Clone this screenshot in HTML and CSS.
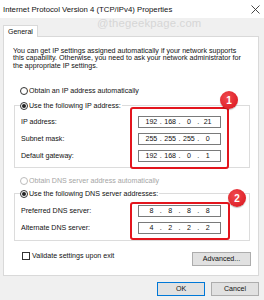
FILE: index.html
```html
<!DOCTYPE html>
<html>
<head>
<meta charset="utf-8">
<link rel="stylesheet" href="styles.css">
</head>
<body>
<div class="dialog">
  <div class="titlebar">
    <span class="title">Internet Protocol Version 4 (TCP/IPv4) Properties</span>
    <svg class="close" width="9" height="9" viewBox="0 0 9 9"><path d="M0.5 0.5 L8.5 8.5 M8.5 0.5 L0.5 8.5" stroke="#333" stroke-width="0.9" fill="none"/></svg>
  </div>
  <div class="tabs"><div class="tab">General</div></div>
  <div class="panel">
    <p class="intro">You can get IP settings assigned automatically if your network supports this capability. Otherwise, you need to ask your network administrator for the appropriate IP settings.</p>

    <div class="radio-row"><span class="radio"></span><span>Obtain an IP address automatically</span></div>
    <fieldset class="group group-ip">
      <legend class="radio-row"><span class="radio checked"></span><span>Use the following IP address:</span></legend>
      <div class="field"><span class="label">IP address:</span><span class="ip"><span>192</span><i>.</i><span>168</span><i>.</i><span>0</span><i>.</i><span>21</span></span></div>
      <div class="field"><span class="label">Subnet mask:</span><span class="ip"><span>255</span><i>.</i><span>255</span><i>.</i><span>255</span><i>.</i><span>0</span></span></div>
      <div class="field"><span class="label">Default gateway:</span><span class="ip"><span>192</span><i>.</i><span>168</span><i>.</i><span>0</span><i>.</i><span>1</span></span></div>
    </fieldset>

    <div class="radio-row disabled"><span class="radio"></span><span>Obtain DNS server address automatically</span></div>
    <fieldset class="group group-dns">
      <legend class="radio-row"><span class="radio checked"></span><span>Use the following DNS server addresses:</span></legend>
      <div class="field"><span class="label">Preferred DNS server:</span><span class="ip"><span>8</span><i>.</i><span>8</span><i>.</i><span>8</span><i>.</i><span>8</span></span></div>
      <div class="field"><span class="label">Alternate DNS server:</span><span class="ip"><span>4</span><i>.</i><span>2</span><i>.</i><span>2</span><i>.</i><span>2</span></span></div>
    </fieldset>

    <div class="bottom-row">
      <div class="check-row"><span class="checkbox"></span><span>Validate settings upon exit</span></div>
      <button class="btn advanced">Advanced...</button>
    </div>
  </div>
  <div class="footer">
    <button class="btn primary">OK</button>
    <button class="btn">Cancel</button>
  </div>

  <div class="watermark">@thegeekpage.com</div>
  <div class="mark mark-1"></div>
  <div class="badge badge-1">1</div>
  <div class="mark mark-2"></div>
  <div class="badge badge-2">2</div>
</div>
</body>
</html>
```

FILE: styles.css
```css
* { box-sizing: border-box; }
html, body { margin: 0; padding: 0; }
body {
  width: 264px;
  height: 300px;
  overflow: hidden;
  background: #f0f0f0;
  font-family: "Liberation Sans", Arial, sans-serif;
  font-size: 7.1px;
  color: #111;
}
.dialog {
  position: relative;
  width: 264px;
  height: 300px;
  background: #f0f0f0;
}
.titlebar {
  height: 18px;
  background: #fff;
  display: flex;
  align-items: center;
  justify-content: space-between;
  padding: 0 4px 0 3px;
}
.title { font-size: 7.75px; color: #111; }
.close { display: block; }

.tabs {
  height: 18px;
  display: flex;
  align-items: flex-end;
  padding-left: 3px;
}
.tab {
  width: 35px;
  height: 12px;
  margin-bottom: -1px;
  background: #fff;
  border: 1px solid #d9d9d9;
  border-bottom: none;
  position: relative;
  z-index: 1;
  padding: 2px 0 0 4px;
  font-size: 7px;
}

.panel {
  margin: 0 5px 0 3px;
  height: 240px;
  background: #fff;
  border: 1px solid #d9d9d9;
  padding: 0 0 0 9px;
  display: flex;
  flex-direction: column;
}
.intro {
  margin: 10.5px 0 0 0;
  line-height: 7.5px;
  width: 230px;
}

.radio-row {
  display: flex;
  align-items: center;
  gap: 1px;
  height: 9px;
}
.panel > .radio-row { margin: 16px 0 0 7px; }
.panel > .radio-row.disabled { margin-top: 8.5px; color: #a5a5a5; }
.radio {
  width: 8px;
  height: 8px;
  border: 1px solid #333;
  border-radius: 50%;
  background: #fff;
  display: flex;
  align-items: center;
  justify-content: center;
  flex: none;
}
.radio.checked::after {
  content: "";
  width: 4px;
  height: 4px;
  border-radius: 50%;
  background: #222;
}
.disabled .radio { border-color: #bcbcbc; }

.group {
  margin: 0 8px 0 1px;
  border: 1px solid #dcdcdc;
  padding: 0 0 0 6px;
  display: flex;
  flex-direction: column;
  gap: 5px;
}
.group legend {
  padding: 0 1px 0 0;
  margin-left: -1px;
  background: #fff;
}
.group-ip { padding-top: 5.5px; padding-bottom: 5px; margin-top: 6px; }
.group-dns { padding-top: 6.8px; padding-bottom: 5.3px; margin-top: 4.3px; gap: 5.4px; }

.field {
  display: grid;
  grid-template-columns: 117px 83px;
  align-items: center;
  height: 12px;
}
.ip {
  height: 12px;
  border: 1px solid #7a7a7a;
  display: grid;
  grid-template-columns: 1fr auto 1fr auto 1fr auto 1fr;
  align-items: center;
  text-align: center;
  padding: 0 4px;
}
.ip i { font-style: normal; }

.bottom-row {
  display: flex;
  justify-content: space-between;
  align-items: flex-start;
  margin-top: 11px;
  padding-left: 9px;
  padding-right: 7px;
}
.check-row {
  display: flex;
  align-items: center;
  gap: 2px;
  height: 9px;
}
.checkbox {
  width: 8px;
  height: 8px;
  border: 1px solid #333;
  background: #fff;
}
.btn {
  font-family: "Liberation Sans", Arial, sans-serif;
  font-size: 7.1px;
  color: #111;
  background: #e1e1e1;
  border: 1px solid #adadad;
  height: 14px;
  padding: 0;
  margin: 0;
}
.advanced { width: 59px; margin-top: 0.5px; }

.footer {
  display: flex;
  justify-content: flex-end;
  gap: 6px;
  padding: 5.5px 5px 0 0;
}
.footer .btn { width: 48px; }
.btn.primary { border-color: #0078d7; }

.watermark {
  position: absolute;
  left: 97px;
  top: 17px;
  font-size: 11.3px;
  color: #d6d6d6;
  letter-spacing: 0.2px;
}
.mark {
  position: absolute;
  border: 2px solid #e3151d;
  border-radius: 3px;
}
.mark-1 { left: 130px; top: 107px; width: 99px; height: 62px; }
.mark-2 { left: 130px; top: 201.5px; width: 100px; height: 38.5px; }
.badge {
  position: absolute;
  width: 18px;
  height: 18px;
  border-radius: 50%;
  background: radial-gradient(circle at 40% 35%, #f0494e, #d8121b);
  color: #fff;
  font-weight: bold;
  font-size: 10px;
  display: flex;
  align-items: center;
  justify-content: center;
  box-shadow: 0 1px 1px rgba(0,0,0,0.25);
}
.badge-1 { left: 220px; top: 91px; }
.badge-2 { left: 228px; top: 189px; }
```
